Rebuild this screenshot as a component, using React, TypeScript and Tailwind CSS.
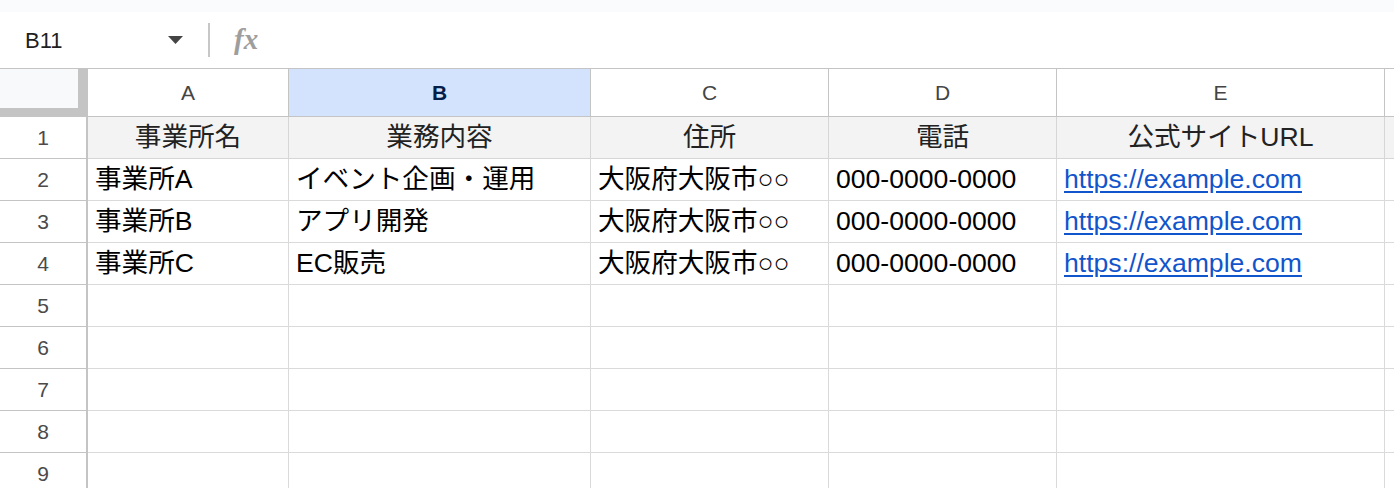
import React from 'react';

const cols = [
  { key: 'A', w: 'w-[201px]' },
  { key: 'B', w: 'w-[302px]' },
  { key: 'C', w: 'w-[238px]' },
  { key: 'D', w: 'w-[228px]' },
  { key: 'E', w: 'w-[328px]' },
];

const head = ['事業所名', '業務内容', '住所', '電話', '公式サイトURL'];

const rows = [
  ['事業所A', 'イベント企画・運用', '大阪府大阪市○○', '000-0000-0000', 'https://example.com'],
  ['事業所B', 'アプリ開発', '大阪府大阪市○○', '000-0000-0000', 'https://example.com'],
  ['事業所C', 'EC販売', '大阪府大阪市○○', '000-0000-0000', 'https://example.com'],
];

const font = "font-['Liberation_Sans','Noto_Sans_CJK_JP',sans-serif]";

function RowNum({ n }: { n: number }) {
  return (
    <div className="flex h-[42px] w-[88px] shrink-0 items-center justify-center border-r-2 border-b border-[#c4c4c4] text-[21px] text-[#4a4a4a]">
      {n}
    </div>
  );
}

function App() {
  return (
    <div className={`h-[488px] w-[1394px] overflow-hidden bg-white ${font}`}>
      {/* top strip */}
      <div className="h-[12px] bg-[#f9fbfd]" />
      {/* formula bar */}
      <div className="flex h-[56px] items-center">
        <div className="flex w-[208px] items-center pl-[25px] pr-[25px]">
          <span className="text-[22px] text-[#1f1f1f]">B11</span>
          <svg className="ml-auto" width="15" height="8" viewBox="0 0 15 8">
            <path d="M0 0 L15 0 L7.5 8 Z" fill="#444" />
          </svg>
        </div>
        <div className="h-[34px] w-[2px] bg-[#c7c7c7]" />
        <span className="ml-[24px] font-['Liberation_Serif',serif] text-[29px] font-bold italic text-[#9e9e9e]">
          fx
        </span>
      </div>
      {/* column headers */}
      <div className="flex border-t border-[#c4c4c4]">
        <div className="h-[48px] w-[88px] shrink-0 bg-[#c4c4c4]">
          <div className="h-[39px] w-[78px] bg-[#f8f9fa]" />
        </div>
        {cols.map((c) => (
          <div
            key={c.key}
            className={`${c.w} flex h-[48px] shrink-0 items-center justify-center border-r border-b border-[#c4c4c4] text-[21px] ${
              c.key === 'B' ? 'bg-[#d3e3fd] font-bold text-[#041e49]' : 'text-[#444]'
            }`}
          >
            {c.key}
          </div>
        ))}
        <div className="h-[48px] flex-1 border-b border-[#c4c4c4]" />
      </div>
      {/* row 1 */}
      <div className="flex">
        <RowNum n={1} />
        {cols.map((c, i) => (
          <div
            key={c.key}
            className={`${c.w} flex h-[42px] shrink-0 items-center justify-center border-r border-b border-[#d6d6d6] bg-[#f3f3f3] text-[26.6px] leading-[1.2] text-[#222]`}
          >
            {head[i]}
          </div>
        ))}
        <div className="h-[42px] flex-1 border-b border-[#d6d6d6] bg-[#f3f3f3]" />
      </div>
      {/* data rows */}
      {rows.map((r, ri) => (
        <div key={ri} className="flex">
          <RowNum n={ri + 2} />
          {cols.map((c, i) => (
            <div
              key={c.key}
              className={`${c.w} flex h-[42px] shrink-0 items-center overflow-hidden whitespace-nowrap border-r border-b border-[#dadada] px-[7px] pt-[1px] text-[26.6px] leading-[1.2] text-black`}
            >
              {i === 4 ? (
                <span className="text-[#1155cc] underline underline-offset-[3px]">{r[i]}</span>
              ) : (
                r[i]
              )}
            </div>
          ))}
          <div className="h-[42px] flex-1 border-b border-[#dadada]" />
        </div>
      ))}
      {/* empty rows */}
      {[5, 6, 7, 8, 9].map((n) => (
        <div key={n} className="flex">
          <RowNum n={n} />
          {cols.map((c) => (
            <div key={c.key} className={`${c.w} h-[42px] shrink-0 border-r border-b border-[#dadada]`} />
          ))}
          <div className="h-[42px] flex-1 border-b border-[#dadada]" />
        </div>
      ))}
    </div>
  );
}

export default App;
